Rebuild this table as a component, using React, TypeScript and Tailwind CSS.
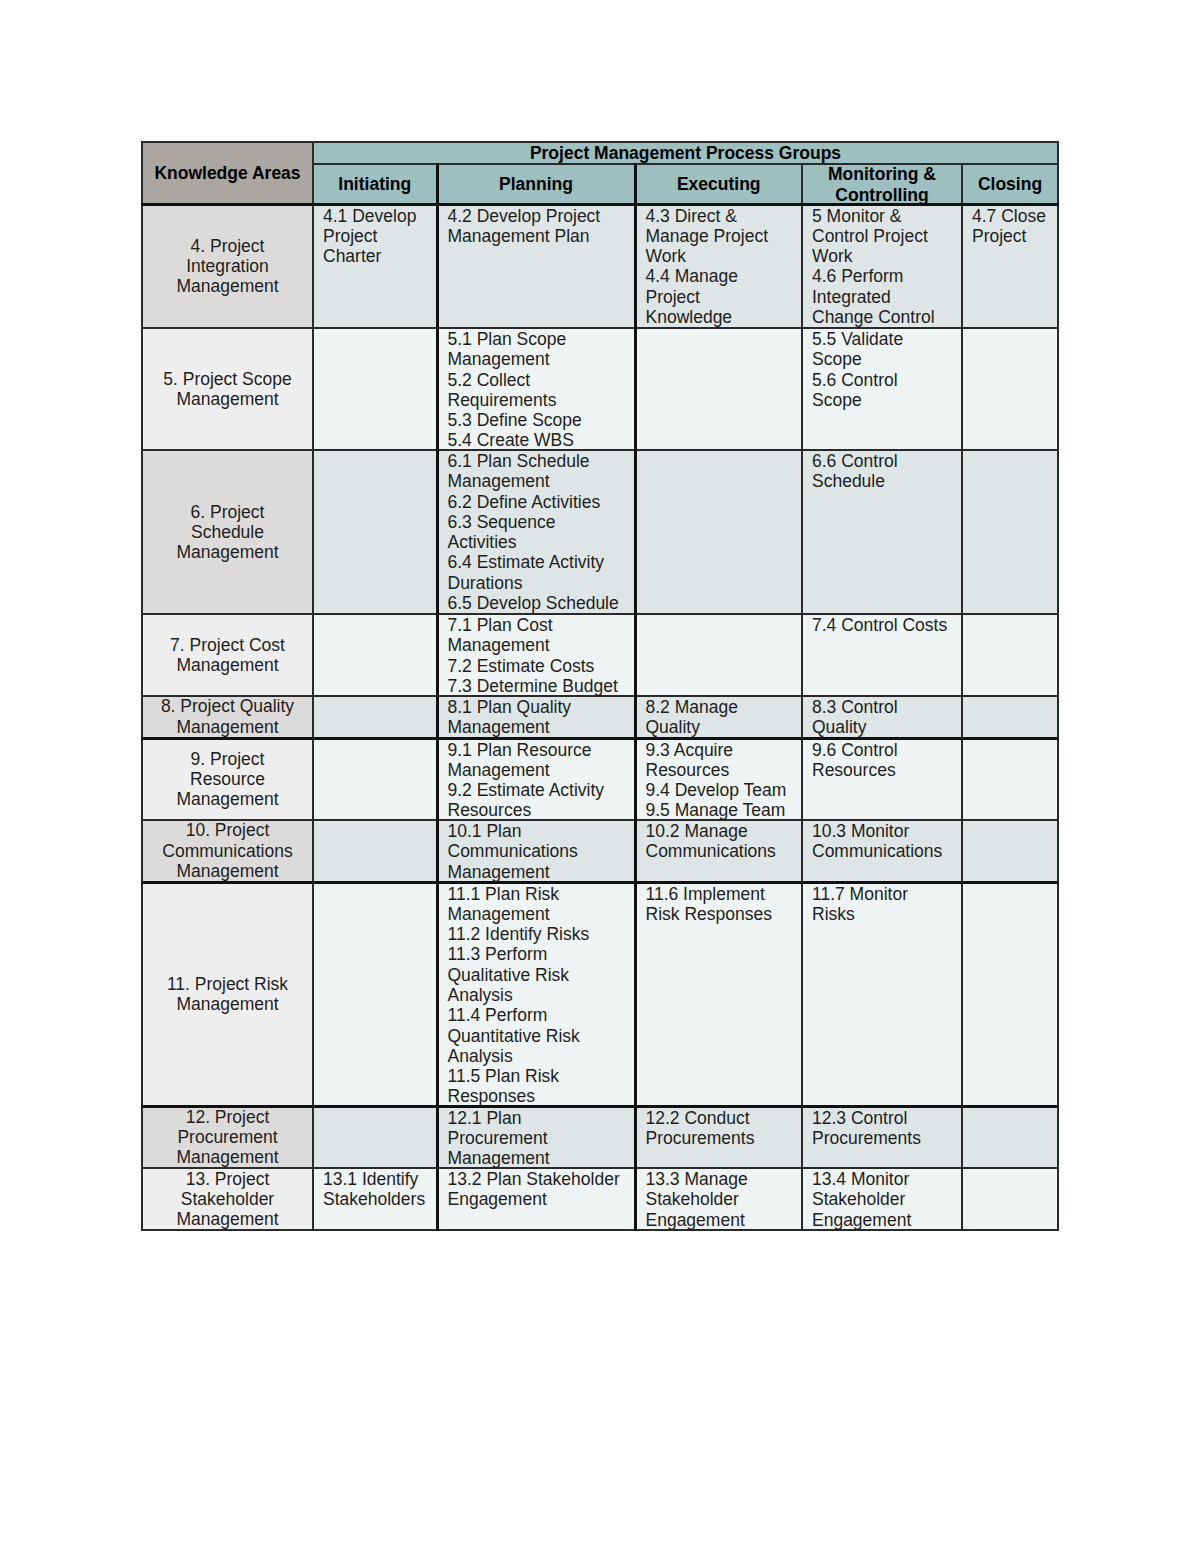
import React from "react";

type Row = {
  area: string[];
  cells: string[][]; // initiating, planning, executing, monitoring, closing
  h: number;
  dark: boolean;
  thickTop?: boolean;
};

const rows: Row[] = [
  {
    area: ["4. Project", "Integration", "Management"],
    cells: [
      ["4.1 Develop", "Project", "Charter"],
      ["4.2 Develop Project", "Management Plan"],
      ["4.3 Direct &", "Manage Project", "Work", "4.4 Manage", "Project", "Knowledge"],
      ["5 Monitor &", "Control Project", "Work", "4.6 Perform", "Integrated", "Change Control"],
      ["4.7 Close", "Project"],
    ],
    h: 124,
    dark: true,
    thickTop: true,
  },
  {
    area: ["5. Project Scope", "Management"],
    cells: [
      [],
      ["5.1 Plan Scope", "Management", "5.2 Collect", "Requirements", "5.3 Define Scope", "5.4 Create WBS"],
      [],
      ["5.5 Validate", "Scope", "5.6 Control", "Scope"],
      [],
    ],
    h: 122,
    dark: false,
  },
  {
    area: ["6. Project", "Schedule", "Management"],
    cells: [
      [],
      [
        "6.1 Plan Schedule",
        "Management",
        "6.2 Define Activities",
        "6.3 Sequence",
        "Activities",
        "6.4 Estimate Activity",
        "Durations",
        "6.5 Develop Schedule",
      ],
      [],
      ["6.6 Control", "Schedule"],
      [],
    ],
    h: 164,
    dark: true,
  },
  {
    area: ["7. Project Cost", "Management"],
    cells: [
      [],
      ["7.1 Plan Cost", "Management", "7.2 Estimate Costs", "7.3 Determine Budget"],
      [],
      ["7.4 Control Costs"],
      [],
    ],
    h: 82,
    dark: false,
  },
  {
    area: ["8. Project Quality", "Management"],
    cells: [[], ["8.1 Plan Quality", "Management"], ["8.2 Manage", "Quality"], ["8.3 Control", "Quality"], []],
    h: 42,
    dark: true,
  },
  {
    area: ["9. Project", "Resource", "Management"],
    cells: [
      [],
      ["9.1 Plan Resource", "Management", "9.2 Estimate Activity", "Resources"],
      ["9.3 Acquire", "Resources", "9.4 Develop Team", "9.5 Manage Team"],
      ["9.6 Control", "Resources"],
      [],
    ],
    h: 82,
    dark: false,
    thickTop: true,
  },
  {
    area: ["10. Project", "Communications", "Management"],
    cells: [
      [],
      ["10.1 Plan", "Communications", "Management"],
      ["10.2 Manage", "Communications"],
      ["10.3 Monitor", "Communications"],
      [],
    ],
    h: 62,
    dark: true,
  },
  {
    area: ["11. Project Risk", "Management"],
    cells: [
      [],
      [
        "11.1 Plan Risk",
        "Management",
        "11.2 Identify Risks",
        "11.3 Perform",
        "Qualitative Risk",
        "Analysis",
        "11.4 Perform",
        "Quantitative Risk",
        "Analysis",
        "11.5 Plan Risk",
        "Responses",
      ],
      ["11.6 Implement", "Risk Responses"],
      ["11.7 Monitor", "Risks"],
      [],
    ],
    h: 224,
    dark: false,
    thickTop: true,
  },
  {
    area: ["12. Project", "Procurement", "Management"],
    cells: [
      [],
      ["12.1 Plan", "Procurement", "Management"],
      ["12.2 Conduct", "Procurements"],
      ["12.3 Control", "Procurements"],
      [],
    ],
    h: 62,
    dark: true,
    thickTop: true,
  },
  {
    area: ["13. Project", "Stakeholder", "Management"],
    cells: [
      ["13.1 Identify", "Stakeholders"],
      ["13.2 Plan Stakeholder", "Engagement"],
      ["13.3 Manage", "Stakeholder", "Engagement"],
      ["13.4 Monitor", "Stakeholder", "Engagement"],
      [],
    ],
    h: 62,
    dark: false,
  },
];

// border on the left side of each process column
const colLeft = [
  "border-l-2 border-l-[#1c1c1c]",
  "border-l-[3px] border-l-[#111]",
  "border-l-[3px] border-l-[#111]",
  "border-l-2 border-l-[#1c1c1c]",
  "border-l-2 border-l-[#1c1c1c]",
];

function Lines({ lines, h, center }: { lines: string[]; h: number; center?: boolean }) {
  return (
    <div
      className={`overflow-visible flex flex-col ${center ? "justify-center items-center text-center" : "justify-start"}`}
      style={{ height: h }}
    >
      {lines.map((l, i) => (
        <div key={i} className="whitespace-nowrap">
          {l}
        </div>
      ))}
    </div>
  );
}

const th = "bg-[#9dbfc0] font-bold text-black text-center align-middle border-2 border-[#2a2a2a] p-0";

export default function App() {
  return (
    <div
      className="w-[1200px] h-[1553px] bg-white pt-[141px] pl-[141px] text-[#1e1e1e]"
      style={{ fontFamily: '"Liberation Sans", Arial, sans-serif' }}
    >
      <table className="table-fixed border-collapse w-[916px] text-[17.5px] leading-[20.3px] border-2 border-[#3a3a3a]">
        <colgroup>
          <col className="w-[171px]" />
          <col className="w-[124px]" />
          <col className="w-[198px]" />
          <col className="w-[167px]" />
          <col className="w-[160px]" />
          <col className="w-[96px]" />
        </colgroup>
        <thead>
          <tr className="h-[22px]">
            <th
              rowSpan={2}
              className="bg-[#aba7a0] font-bold text-black text-center align-middle border-2 border-[#2a2a2a] border-b-[3px] border-b-[#111] p-0"
            >
              Knowledge Areas
            </th>
            <th colSpan={5} className={`${th} border-b-[1.5px] border-b-[#444]`}>
              <div className="h-[20px] leading-[20px]">Project Management Process Groups</div>
            </th>
          </tr>
          <tr className="h-[40px]">
            {["Initiating", "Planning", "Executing"].map((t, i) => (
              <th key={t} className={`${th} border-b-[3px] border-b-[#111] ${colLeft[i]}`}>
                <div className="h-[37px] flex items-center justify-center">{t}</div>
              </th>
            ))}
            <th className={`${th} border-b-[3px] border-b-[#111]`}>
              <div className="h-[37px] flex flex-col items-center justify-center leading-[21px] pt-[3px]">
                <div>Monitoring &amp;</div>
                <div>Controlling</div>
              </div>
            </th>
            <th className={`${th} border-b-[3px] border-b-[#111]`}>
              <div className="h-[37px] flex items-center justify-center">Closing</div>
            </th>
          </tr>
        </thead>
        <tbody>
          {rows.map((r, ri) => (
            <tr key={ri} style={{ height: r.h }}>
              <td
                className={`${r.dark ? "bg-[#dddbda]" : "bg-[#efeeee]"} align-middle p-0 border-2 border-[#2a2a2a] ${
                  r.thickTop ? "border-t-[3px] border-t-[#111]" : ""
                }`}
              >
                <Lines lines={r.area} h={r.h - 3} center />
              </td>
              {r.cells.map((c, ci) => (
                <td
                  key={ci}
                  className={`${r.dark ? "bg-[#dde5e6]" : "bg-[#eef3f3]"} align-top pl-[9px] pr-0 py-0 border-2 border-[#2a2a2a] ${colLeft[ci]} ${
                    r.thickTop ? "border-t-[3px] border-t-[#111]" : ""
                  }`}
                >
                  <Lines lines={c} h={r.h - 3} />
                </td>
              ))}
            </tr>
          ))}
        </tbody>
      </table>
    </div>
  );
}
